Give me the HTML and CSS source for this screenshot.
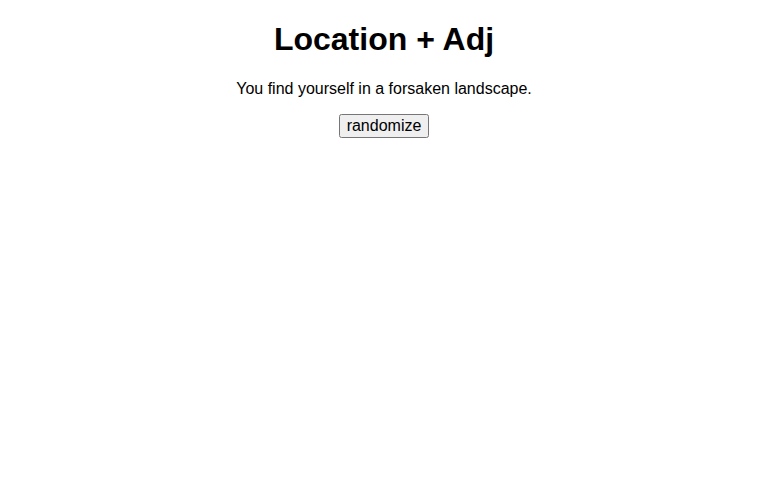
FILE: index.html
```html
<!DOCTYPE html>
<html lang="en">
<head>
  <meta charset="UTF-8" />
  <title>Location + Adj</title>
  <link rel="stylesheet" href="styles.css">
</head>
<body>
  <h1>Location + Adj</h1>
  <p id="scene">You find yourself in a forsaken landscape.</p>
  <div>
    <button class="roll" onclick="randomize()">randomize</button>
  </div>
  <script>
    const adjs = ["forsaken", "gloomy", "sunlit", "misty", "ancient"];
    const places = ["landscape", "forest", "village", "cavern", "harbor"];
    function pick(list) {
      return list[Math.floor(Math.random() * list.length)];
    }
    function randomize() {
      document.getElementById("scene").innerText =
        "You find yourself in a " + pick(adjs) + " " + pick(places) + ".";
    }
  </script>
</body>
</html>
```

FILE: styles.css
```css
body {
  margin: 0 8px;
  font-family: "Liberation Sans", Arial, sans-serif;
  text-align: center;
}
.roll {
  font-family: "Liberation Sans", Arial, sans-serif;
  font-size: 16px;
}
```
